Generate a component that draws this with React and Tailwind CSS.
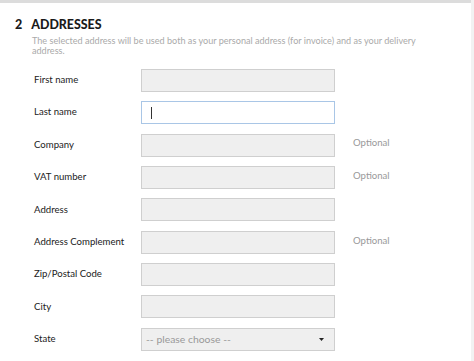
import { useState } from "react";

const fields = [
  { label: "First name" },
  { label: "Last name", focused: true },
  { label: "Company", optional: true },
  { label: "VAT number", optional: true },
  { label: "Address" },
  { label: "Address Complement", optional: true },
  { label: "Zip/Postal Code" },
  { label: "City" },
];

const Field = ({ label, focused, optional }) => (
  <div className="flex items-center h-[23px]">
    <label className="w-[107px] text-[9.6px] text-[#222]">{label}</label>
    {focused ? (
      <div className="w-[194px] h-[23px] bg-white border border-[#a9c6e6] flex items-center pl-[9px]">
        <span className="w-px h-[12px] bg-[#333]" />
      </div>
    ) : (
      <div className="w-[194px] h-[23px] bg-[#efefef] border border-[#cfcfcf]" />
    )}
    {optional && (
      <span className="ml-[18px] -mt-[3px] text-[9.6px] text-[#999]">Optional</span>
    )}
  </div>
);

export default function App() {
  const [state] = useState("");

  return (
    <div className="w-[474px] h-[361px] bg-[#f2f2f2] overflow-hidden" style={{ fontFamily: "Lato, 'Open Sans', sans-serif" }}>
      <div className="w-[471px] h-full bg-white border-t-[3px] border-[#dcdcdc]">
        <div className="pl-[15px] pt-[13px] flex items-center">
          <span className="text-[12.5px] font-black text-[#1a1a1a]">2</span>
          <span className="ml-[9px] text-[12.4px] font-black text-[#1a1a1a]">ADDRESSES</span>
        </div>
        <p className="ml-[32px] w-[400px] mt-[1px] text-[9.1px] leading-[10.5px] text-[#aaa]">
          The selected address will be used both as your personal address (for invoice) and as your delivery address.
        </p>

        <div className="ml-[34px] mt-[12px] flex flex-col gap-[9.4px]">
          {fields.map((f) => (
            <Field key={f.label} {...f} />
          ))}
          <div className="flex items-center h-[23px]">
            <label className="w-[107px] text-[9.6px] text-[#222]">State</label>
            <div className="w-[194px] h-[23px] bg-[#efefef] border border-[#cfcfcf] flex items-center justify-between pl-[4px] pr-[10px]">
              <span className="text-[10.4px] text-[#999]">{state || "-- please choose --"}</span>
              <svg width="5" height="3" viewBox="0 0 5 3">
                <path d="M0 0h5L2.5 3z" fill="#222" />
              </svg>
            </div>
          </div>
        </div>
      </div>
    </div>
  );
}
